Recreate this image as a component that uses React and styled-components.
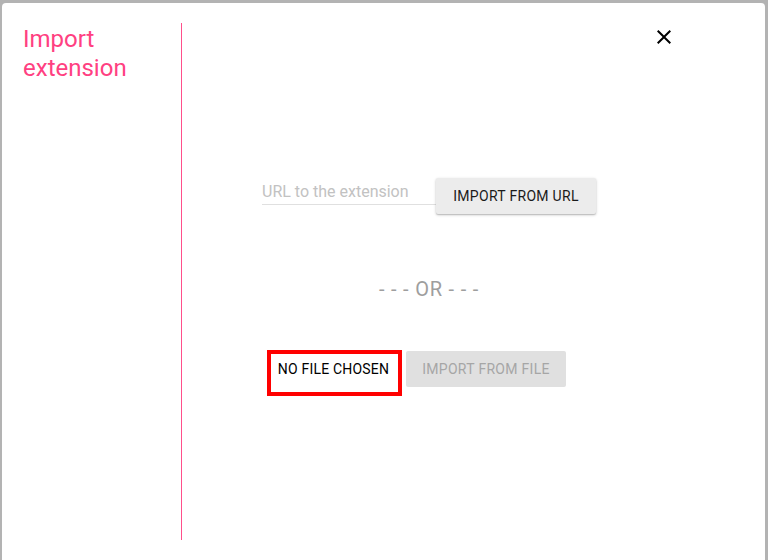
import React from "react";
import styled, { createGlobalStyle } from "styled-components";

const GlobalStyle = createGlobalStyle`
    html, body {
        margin: 0;
        height: 100%;
        overflow: hidden;
        background: #b3b3b3;
        font-family: Roboto, "Liberation Sans", sans-serif;
    }
`;

const Modal = styled.div`
    background: #ffffff;
    border-radius: 4px 4px 0 0;
    box-sizing: border-box;
    display: flex;
    height: 560px;
    margin: 3px 0 0 2px;
    width: 763px;
`;

const Sidebar = styled.aside`
    box-sizing: border-box;
    flex: 0 0 179px;
    padding: 22px 0 0 21px;
`;

const VerticalRule = styled.div`
    align-self: stretch;
    background: #ff4f8b;
    flex: 0 0 1px;
    margin: 20px 0 23px;
`;

const Title = styled.h2`
    color: #ff4081;
    font-size: 24px;
    font-weight: 400;
    line-height: 29px;
    margin: 0;
`;

const Panel = styled.section`
    display: flex;
    flex: 1;
    flex-direction: column;
    padding: 22px 89px 0 0;
`;

const CloseRow = styled.div`
    display: flex;
    justify-content: flex-end;
`;

const CloseButton = styled.button`
    align-items: center;
    background: none;
    border: none;
    cursor: pointer;
    display: flex;
    height: 24px;
    padding: 0;
    width: 24px;
`;

const Row = styled.div`
    align-items: flex-start;
    display: flex;
    gap: ${ props => props.gap || 0 }px;
    justify-content: center;
    margin-top: ${ props => props.top }px;
    padding-right: ${ props => props.shift || 0 }px;
`;

const UrlInput = styled.input`
    border: none;
    border-bottom: 1px solid #e0e0e0;
    box-sizing: content-box;
    color: #212121;
    font-family: Roboto, "Liberation Sans", sans-serif;
    font-size: 16px;
    height: 26px;
    outline: none;
    padding: 0;
    width: 174px;

    &::placeholder {
        color: #c2c2c2;
    }
`;

const Button = styled.button`
    background: ${ props => props.disabled ? "#e0e0e0" : "#ececec" };
    border: none;
    border-radius: 2px;
    box-shadow: ${ props => props.disabled ? "none" : "0 1px 3px rgba(0, 0, 0, 0.22), 0 1px 1px rgba(0, 0, 0, 0.12)" };
    color: ${ props => props.disabled ? "#a6a6a6" : "#1a1a1a" };
    font-family: Roboto, "Liberation Sans", sans-serif;
    font-size: 14px;
    font-weight: 400;
    height: 36px;
    letter-spacing: 0.3px;
    margin-top: ${ props => props.offset || 0 }px;
    padding: 0;
    text-transform: uppercase;
    width: 160px;
`;

const Divider = styled.div`
    color: #9e9e9e;
    font-size: 20px;
    letter-spacing: 0.8px;
    line-height: 24px;
    margin-top: 63px;
    text-align: center;
    white-space: pre;
`;

const FileLabel = styled.label`
    align-items: center;
    border: 4px solid #ff0000;
    box-sizing: border-box;
    color: #000000;
    display: flex;
    font-size: 14px;
    font-weight: 400;
    height: 46px;
    justify-content: center;
    letter-spacing: 0.2px;
    padding: 0 2px 8px 0;
    text-transform: uppercase;
    width: 135px;
`;

const HiddenFile = styled.input`
    display: none;
`;

export default function App() {
    return (
        <>
            <GlobalStyle />
            <Modal>
                <Sidebar>
                    <Title>Import<br />extension</Title>
                </Sidebar>
                <VerticalRule />
                <Panel>
                    <CloseRow>
                        <CloseButton aria-label="Close">
                            <svg width="24" height="24" viewBox="0 0 24 24">
                                <path fill="#000" d="M19 6.41L17.59 5 12 10.59 6.41 5 5 6.41 10.59 12 5 17.59 6.41 19 12 13.41 17.59 19 19 17.59 13.41 12z" />
                            </svg>
                        </CloseButton>
                    </CloseRow>
                    <Row top={ 129 }>
                        <UrlInput placeholder="URL to the extension" />
                        <Button>Import from URL</Button>
                    </Row>
                    <Divider>{ "- - - OR - - -" }</Divider>
                    <Row top={ 49 } gap={ 4 } shift={ 25 }>
                        <FileLabel>
                            No file chosen
                            <HiddenFile type="file" />
                        </FileLabel>
                        <Button disabled offset={ 1 }>Import from file</Button>
                    </Row>
                </Panel>
            </Modal>
        </>
    );
}
